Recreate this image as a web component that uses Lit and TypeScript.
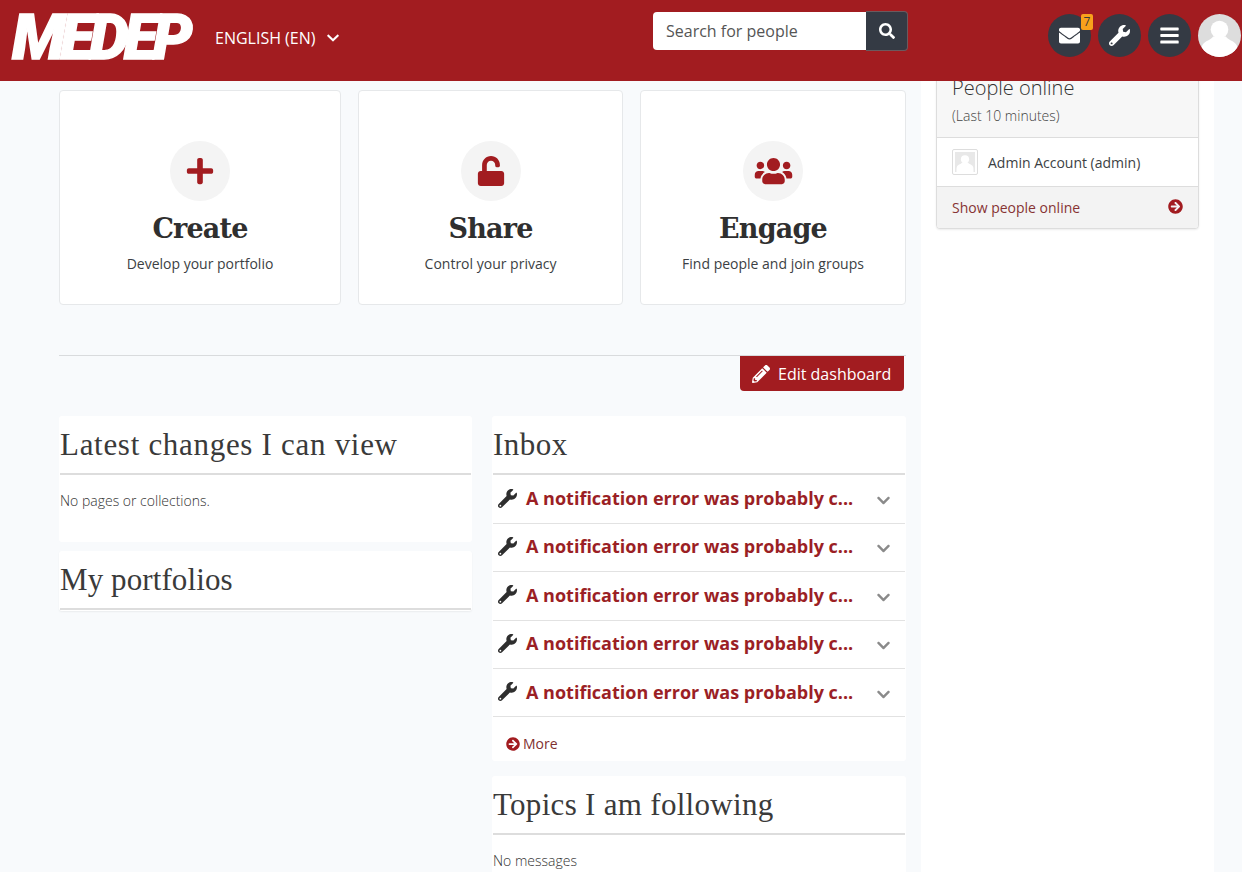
import { LitElement, html, css, svg } from "lit";
import { customElement } from "lit/decorators.js";

const P = {
  wrench: ["0 0 512 512", "M507.73 109.1c-2.24-9.03-13.54-12.09-20.12-5.51l-74.36 74.36-67.88-11.31-11.31-67.88 74.36-74.36c6.62-6.62 3.43-17.9-5.66-20.16-47.38-11.74-99.55.91-136.58 37.93-39.64 39.64-50.55 97.1-34.05 147.2L18.74 402.76c-24.99 24.99-24.99 65.51 0 90.5 24.99 24.99 65.51 24.99 90.5 0l213.21-213.21c50.12 16.71 107.47 5.68 147.37-34.22 37.07-37.07 49.7-89.32 37.91-136.73zM64 472c-13.25 0-24-10.75-24-24 0-13.26 10.75-24 24-24s24 10.74 24 24c0 13.25-10.75 24-24 24z"],
  envelope: ["0 0 512 512", "M502.3 190.8c3.9-3.1 9.7-.2 9.7 4.7V400c0 26.5-21.5 48-48 48H48c-26.5 0-48-21.5-48-48V195.6c0-5 5.7-7.8 9.7-4.7 22.4 17.4 52.1 39.5 154.1 113.6 21.1 15.4 56.7 47.8 92.2 47.6 35.7.3 72-32.8 92.3-47.6 102-74.1 131.6-96.3 154-113.7zM256 320c23.2.4 56.6-29.2 73.4-41.4 132.7-96.3 142.8-104.7 173.4-128.7 5.8-4.5 9.2-11.5 9.2-18.9v-19c0-26.5-21.5-48-48-48H48C21.5 64 0 85.5 0 112v19c0 7.4 3.4 14.3 9.2 18.9 30.6 23.9 40.7 32.4 173.4 128.7 16.8 12.2 50.2 41.8 73.4 41.4z"],
  search: ["0 0 512 512", "M505 442.7L405.3 343c-4.5-4.5-10.6-7-17-7H372c27.6-35.3 44-79.7 44-128C416 93.1 322.9 0 208 0S0 93.1 0 208s93.1 208 208 208c48.3 0 92.7-16.4 128-44v16.3c0 6.4 2.5 12.5 7 17l99.7 99.7c9.4 9.4 24.6 9.4 33.9 0l28.3-28.3c9.4-9.4 9.4-24.6.1-34zM208 336c-70.7 0-128-57.2-128-128 0-70.7 57.2-128 128-128 70.7 0 128 57.2 128 128 0 70.7-57.2 128-128 128z"],
  bars: ["0 0 448 512", "M16 132h416c8.837 0 16-7.163 16-16V76c0-8.837-7.163-16-16-16H16C7.163 60 0 67.163 0 76v40c0 8.837 7.163 16 16 16zm0 160h416c8.837 0 16-7.163 16-16v-40c0-8.837-7.163-16-16-16H16c-8.837 0-16 7.163-16 16v40c0 8.837 7.163 16 16 16zm0 160h416c8.837 0 16-7.163 16-16v-40c0-8.837-7.163-16-16-16H16c-8.837 0-16 7.163-16 16v40c0 8.837 7.163 16 16 16z"],
  plus: ["0 0 448 512", "M416 208H272V64c0-17.67-14.33-32-32-32h-32c-17.67 0-32 14.33-32 32v144H32c-17.67 0-32 14.33-32 32v32c0 17.67 14.33 32 32 32h144v144c0 17.67 14.33 32 32 32h32c17.67 0 32-14.33 32-32V304h144c17.67 0 32-14.33 32-32v-32c0-17.67-14.33-32-32-32z"],
  unlock: ["0 0 448 512", "M400 256H152V152.9c0-39.6 31.7-72.5 71.3-72.9 40-.4 72.7 32.1 72.7 72v16c0 13.3 10.7 24 24 24h32c13.3 0 24-10.7 24-24v-16C376 68 307.5-.3 223.5 0 139.5.3 72 69.5 72 153.5V256H48c-26.5 0-48 21.5-48 48v160c0 26.5 21.5 48 48 48h352c26.5 0 48-21.5 48-48V304c0-26.5-21.5-48-48-48z"],
  users: ["0 0 640 512", "M96 224c35.3 0 64-28.7 64-64s-28.7-64-64-64-64 28.7-64 64 28.7 64 64 64zm448 0c35.3 0 64-28.7 64-64s-28.7-64-64-64-64 28.7-64 64 28.7 64 64 64zm32 32h-64c-17.6 0-33.5 7.1-45.1 18.6 40.3 22.1 68.9 62 75.1 109.4h66c17.7 0 32-14.3 32-32v-32c0-35.3-28.7-64-64-64zm-256 0c61.9 0 112-50.1 112-112S381.9 32 320 32 208 82.1 208 144s50.1 112 112 112zm76.8 32h-8.3c-20.8 10-43.9 16-68.5 16s-47.6-6-68.5-16h-8.3C179.6 288 128 339.6 128 403.2V432c0 26.5 21.5 48 48 48h288c26.5 0 48-21.5 48-48v-28.8c0-63.6-51.6-115.2-115.2-115.2zm-223.7-13.4C161.5 263.1 145.6 256 128 256H64c-35.3 0-64 28.7-64 64v32c0 17.7 14.3 32 32 32h65.9c6.3-47.4 34.9-87.3 75.2-109.4z"],
  pencil: ["0 0 512 512", "M497.9 142.1l-46.1 46.1c-4.7 4.7-12.3 4.7-17 0l-111-111c-4.7-4.7-4.7-12.3 0-17l46.1-46.1c18.7-18.7 49.1-18.7 67.9 0l60.1 60.1c18.8 18.7 18.8 49.1 0 67.9zM284.2 99.8L21.6 362.4.4 483.9c-2.9 16.4 11.4 30.6 27.8 27.8l121.5-21.3 262.6-262.6c4.7-4.7 4.7-12.3 0-17l-111-111c-4.8-4.7-12.4-4.7-17.1 0zM124.1 339.9c-5.5-5.5-5.5-14.3 0-19.8l154-154c5.5-5.5 14.3-5.5 19.8 0s5.5 14.3 0 19.8l-154 154c-5.5 5.5-14.3 5.5-19.8 0zM88 424h48v36.3l-64.5 11.3-31.1-31.1L51.7 376H88v48z"],
  chevron: ["0 0 448 512", "M207.029 381.476L12.686 187.132c-9.373-9.373-9.373-24.569 0-33.941l22.667-22.667c9.357-9.357 24.522-9.375 33.901-.04L224 284.505l154.745-154.021c9.379-9.335 24.544-9.317 33.901.04l22.667 22.667c9.373 9.373 9.373 24.569 0 33.941L240.971 381.476c-9.373 9.372-24.569 9.372-33.942 0z"],
  arrow: ["0 0 512 512", "M256 8c137 0 248 111 248 248S393 504 256 504 8 393 8 256 119 8 256 8zm-28.9 143.6l75.5 72.4H120c-13.3 0-24 10.7-24 24v16c0 13.3 10.7 24 24 24h182.6l-75.5 72.4c-9.7 9.3-9.9 24.8-.4 34.3l11 10.9c9.4 9.4 24.6 9.4 33.9 0L404.3 273c9.4-9.4 9.4-24.6 0-33.9L271.6 106.3c-9.4-9.4-24.6-9.4-33.9 0l-11 10.9c-9.5 9.6-9.3 25.1.4 34.4z"],
} as const;

const icon = (n: keyof typeof P, cls: string) => html`<svg class=${cls} viewBox=${P[n][0]} fill="currentColor">${svg`<path d=${P[n][1]}></path>`}</svg>`;

const silhouette = html`<svg class="sil" viewBox="0 0 40 40"><circle cx="20" cy="14.5" r="8.2" fill="#fff"></circle><path d="M14 21c-1 3-8 4-10 8-1 2-1 6-1 11h34c0-5 0-9-1-11-2-4-9-5-10-8z" fill="#fff"></path></svg>`;

const features = [
  ["plus", "Create", "Develop your portfolio"],
  ["unlock", "Share", "Control your privacy"],
  ["users", "Engage", "Find people and join groups"],
] as const;

@customElement("app-root")
export class AppRoot extends LitElement {
  static styles = css`
    :host { display: block; height: 100vh; overflow: hidden; background: #f8fafc; font-family: "Open Sans", sans-serif; color: #333; font-size: 14px; }
    * { box-sizing: border-box; }
    svg { display: block; flex: none; }
    header { position: relative; z-index: 2; height: 81px; background: #a21c20; display: flex; align-items: flex-start; color: #fff; }
    .logo { width: 215px; padding-left: 12px; height: 81px; overflow: hidden; font: italic 900 63px/76px Roboto, sans-serif; letter-spacing: -5.2px; color: #fff; -webkit-text-stroke: 1.4px #fff; }
    .lang { display: flex; align-items: center; gap: 11px; font-size: 16px; height: 76px; width: 438px; }
    .lang svg { width: 12px; height: 14px; }
    .search { display: flex; width: 255px; margin-top: 11px; height: 40px; }
    .search .input { flex: 1; margin: 1px 0; background: #fff; border-radius: 4px 0 0 4px; color: #555; font-size: 16px; display: flex; align-items: center; padding-left: 13px; }
    .search .btn { width: 42px; background: #343a44; border: 1px solid #6b5a5e; border-left: 0; border-radius: 0 4px 4px 0; display: flex; align-items: center; justify-content: center; }
    .search .btn svg { width: 16px; height: 16px; }
    .tools { margin-left: 140px; margin-top: 14px; display: flex; gap: 7px; }
    .round { position: relative; width: 43px; height: 43px; border-radius: 50%; background: #343a44; display: flex; align-items: center; justify-content: center; }
    .round svg.i { width: 21px; height: 21px; }
    .badge { position: absolute; left: 33px; top: 0; width: 12px; height: 16px; background: #f9a11b; color: #3a3a3a; border-radius: 2px; font-size: 12px; line-height: 15px; text-align: center; }
    .avatar { background: #ddd; overflow: hidden; }
    .avatar .sil { width: 43px; height: 43px; }
    .page { display: flex; padding-left: 59px; height: 791px; }
    main { width: 847px; padding-top: 9px; }
    .features { display: grid; grid-template-columns: 282px 265px 266px; gap: 17px; }
    .feature { height: 215px; background: #fff; border: 1px solid #e6e8ea; border-radius: 4px; display: flex; flex-direction: column; align-items: center; padding-top: 50px; }
    .circle { width: 60px; height: 60px; border-radius: 50%; background: #f4f4f4; color: #a21c20; display: flex; align-items: center; justify-content: center; }
    .circle svg { height: 30px; width: 30px; }
    .circle svg.wide { width: 41px; }
    .feature h2 { margin: 10px 0 0; font: 700 27px/36px "DejaVu Serif", serif; color: #2f2f2f; letter-spacing: -0.8px; }
    .feature p { margin: 7px 0 0; font-size: 14px; line-height: 20px; color: #3c3f44; }
    .rule { margin-top: 50px; border-top: 1px solid #d9dbdd; display: flex; justify-content: flex-end; padding-right: 2px; }
    .edit { width: 164px; height: 35px; background: #a21c20; color: #fff; border-radius: 0 0 4px 4px; font-size: 16px; display: flex; align-items: center; padding-left: 12px; gap: 8px; }
    .edit svg { width: 18px; height: 18px; }
    .cols { margin-top: 25px; display: grid; grid-template-columns: 413px 414px; gap: 20px; align-items: start; }
    .col { display: flex; flex-direction: column; }
    .panel { background: #fff; border-radius: 3px; padding: 0 1px; }
    .panel h3 { margin: 0; height: 59px; border-bottom: 2px solid #ddd; font: 400 31px/57px "Liberation Serif", serif; color: #3a3a3a; letter-spacing: 0.1px; white-space: nowrap; overflow: hidden; }
    .panel h3.latest { letter-spacing: 0.7px; }
    .panel h3.inbox { letter-spacing: 0.5px; }
    .panel h3.topics { letter-spacing: 0.3px; }
    .empty { font-weight: 300; font-size: 14px; line-height: 20px; color: #333; padding-top: 16px; }
    .p1 { height: 126px; }
    .p2 { margin-top: 9px; height: 60px; box-shadow: 0 1px 2px rgba(0,0,0,.06); }
    .p3 { height: 345px; }
    .p4 { margin-top: 15px; height: 200px; }
    .rows { padding-top: .4px; }
    .row { height: 48.4px; border-bottom: 1px solid #e2e2e2; display: flex; align-items: center; padding-left: 5px; }
    .row .w { width: 19px; height: 19px; color: #2e2e2e; margin-top: -2px; }
    .row b { margin-left: 9px; width: 339px; font-size: 18px; font-weight: 700; color: #9b1f25; white-space: nowrap; margin-top: -2px; }
    .row .c { width: 13px; height: 15px; color: #8a8a8a; margin: 3px 0 0 12px; }
    .more { display: flex; align-items: center; gap: 3px; padding: 16.6px 0 0 13px; color: #7f3030; font-size: 14px; line-height: 20px; }
    .more svg { width: 14px; height: 14px; color: #a21c20; }
    aside { width: 293px; margin-left: 15px; background: #fff; padding: 0 15px; }
    .card { width: 263px; margin-top: -10px; border: 1px solid #ddd; border-radius: 4px; background: #fff; box-shadow: 0 1px 2px rgba(0,0,0,.08); overflow: hidden; }
    .card .head { height: 66px; background: #f7f7f7; border-bottom: 1px solid #ddd; padding: 2px 15px 0; }
    .card .t { font-size: 20px; font-weight: 300; line-height: 28px; color: #333; }
    .card .s { font-size: 14px; font-weight: 300; line-height: 20px; margin-top: 4px; color: #444; }
    .person { height: 49px; display: flex; align-items: center; padding-left: 15px; gap: 10px; border-bottom: 1px solid #ddd; font-size: 14px; color: #3c3f44; }
    .mini { width: 26px; height: 26px; border: 1px solid #ddd; border-radius: 2px; padding: 2px; background: #fff; }
    .mini div { width: 100%; height: 100%; background: #e8e8e8; overflow: hidden; }
    .mini .sil { width: 20px; height: 20px; }
    .foot { height: 41px; background: #f3f3f3; display: flex; align-items: center; justify-content: space-between; padding: 0 15px; color: #873333; font-size: 14px; }
    .foot svg { width: 15px; height: 15px; color: #a21c20; margin-top: -2px; }
  `;

  render() {
    return html`
      <header>
        <div class="logo">MEDEP</div>
        <div class="lang">ENGLISH (EN) ${icon("chevron", "")}</div>
        <div class="search">
          <div class="input">Search for people</div>
          <div class="btn">${icon("search", "")}</div>
        </div>
        <div class="tools">
          <div class="round">${icon("envelope", "i")}<span class="badge">7</span></div>
          <div class="round">${icon("wrench", "i")}</div>
          <div class="round">${icon("bars", "i")}</div>
          <div class="round avatar">${silhouette}</div>
        </div>
      </header>
      <div class="page">
        <main>
          <section class="features">
            ${features.map(([i, t, d]) => html`
              <div class="feature">
                <div class="circle">${icon(i, i === "users" ? "wide" : "")}</div>
                <h2>${t}</h2>
                <p>${d}</p>
              </div>`)}
          </section>
          <div class="rule"><div class="edit">${icon("pencil", "")}Edit dashboard</div></div>
          <div class="cols">
            <div class="col">
              <section class="panel p1">
                <h3 class="latest">Latest changes I can view</h3>
                <div class="empty">No pages or collections.</div>
              </section>
              <section class="panel p2"><h3>My portfolios</h3></section>
            </div>
            <div class="col">
              <section class="panel p3">
                <h3 class="inbox">Inbox</h3>
                <div class="rows">
                  ${[0, 1, 2, 3, 4].map(() => html`
                    <div class="row">
                      ${icon("wrench", "w")}
                      <b>A notification error was probably c...</b>
                      ${icon("chevron", "c")}
                    </div>`)}
                </div>
                <div class="more">${icon("arrow", "")}More</div>
              </section>
              <section class="panel p4">
                <h3 class="topics">Topics I am following</h3>
                <div class="empty">No messages</div>
              </section>
            </div>
          </div>
        </main>
        <aside>
          <div class="card">
            <div class="head">
              <div class="t">People online</div>
              <div class="s">(Last 10 minutes)</div>
            </div>
            <div class="person">
              <div class="mini"><div>${silhouette}</div></div>
              Admin Account (admin)
            </div>
            <div class="foot">Show people online ${icon("arrow", "")}</div>
          </div>
        </aside>
      </div>
    `;
  }
}
